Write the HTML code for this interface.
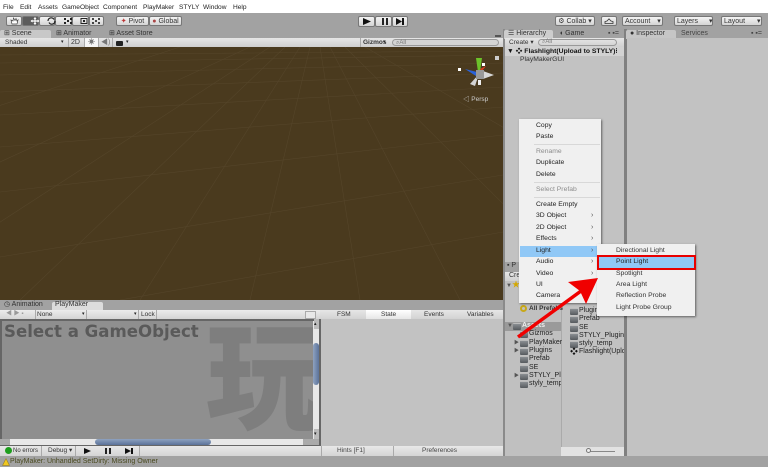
<!DOCTYPE html>
<html><head><meta charset="utf-8">
<style>
html,body{margin:0;padding:0;background:#fff}
#r{position:relative;width:768px;height:467px;overflow:hidden;background:#a2a2a2;font:7px "Liberation Sans","Noto Sans CJK JP",sans-serif;color:#222;filter:blur(.35px)}
#r div,#r span.a{position:absolute;white-space:nowrap;box-sizing:border-box}
.t{line-height:10px;height:10px}
.m{font-size:6.600px}
.btn{background:linear-gradient(#f4f4f4,#d4d4d4);border:1px solid #777;border-radius:2px;text-align:center;line-height:9px;font-size:7px;color:#333}
.mi{left:17px;font-size:6.800px;line-height:10px;height:10px;color:#222}
.dis{color:#8c8c8c}
.ar{left:72px;font-size:7px;color:#555;line-height:10px}
.f{width:8px;height:7px;background:linear-gradient(#8a8e92,#565a5e);border-top:1px solid #bbb;border-radius:1px}
</style></head><body><div id="r">
<!-- menu bar -->
<div style="left:0;top:0;width:768px;height:13px;background:#fff"></div>
<div class="t m" style="left:3px;top:3px">File</div>
<div class="t m" style="left:20px;top:3px">Edit</div>
<div class="t m" style="left:38px;top:3px">Assets</div>
<div class="t m" style="left:62px;top:3px">GameObject</div>
<div class="t m" style="left:103px;top:3px">Component</div>
<div class="t m" style="left:143px;top:3px">PlayMaker</div>
<div class="t m" style="left:179px;top:3px">STYLY</div>
<div class="t m" style="left:203px;top:3px">Window</div>
<div class="t m" style="left:233px;top:3px">Help</div>

<!-- transform tools -->
<div class="btn" style="left:6px;top:16px;width:16px;height:10px"></div>
<div class="btn" style="left:22px;top:16px;width:17px;height:10px;background:#5c5c5c"></div>
<div class="btn" style="left:39px;top:16px;width:16px;height:10px"></div>
<div class="btn" style="left:55px;top:16px;width:17px;height:10px"></div>
<div class="btn" style="left:72px;top:16px;width:17px;height:10px"></div>
<div class="btn" style="left:89px;top:16px;width:15px;height:10px"></div>
<svg style="position:absolute;left:6px;top:16px" width="98" height="10" fill="none">
<path d="M6 8L5 4L7 5L7.500 2L9 4.500L10 2.500L11 5L12 4L11 8Z" fill="#fff" stroke="#444" stroke-width=".7"/>
<path d="M25 5H33M29 1.500V8.500" stroke="#fff" stroke-width="1.200"/>
<path d="M24.500 5L26.500 3.500V6.500ZM33.500 5L31.500 3.500V6.500ZM29 1L27.500 3H30.500ZM29 9L27.500 7H30.500Z" fill="#fff"/>
<path d="M42 5A3.200 3.200 0 0 1 48 3.500M49 5A3.200 3.200 0 0 1 43 6.500" stroke="#222" stroke-width="1.200"/>
<path d="M58 2h2v2h-2zM64 2h2v2h-2zM58 6h2v2h-2zM64 6h2v2h-2zM61 4h2v2h-2z" fill="#222"/>
<rect x="75" y="2.500" width="6" height="5" stroke="#222"/><rect x="77" y="4" width="2" height="2" fill="#222"/>
<path d="M86 2h2v2h-2zM92 2h2v2h-2zM86 6h2v2h-2zM92 6h2v2h-2zM89 4h2v2h-2z" fill="#444"/>
</svg>
<div class="btn" style="left:116px;top:16px;width:33px;height:10px"><span style="color:#b33">✦</span> Pivot</div>
<div class="btn" style="left:149px;top:16px;width:33px;height:10px"><span style="color:#a44">●</span> Global</div>

<!-- play -->
<div class="btn" style="left:358px;top:16px;width:17px;height:11px"></div>
<div class="btn" style="left:375px;top:16px;width:17px;height:11px"></div>
<div class="btn" style="left:392px;top:16px;width:16px;height:11px"></div>
<svg style="position:absolute;left:358px;top:16px" width="50" height="11"><path d="M5 2L13 5.500L5 9Z" fill="#111"/><path d="M24 2h2v7h-2zM28 2h2v7h-2z" fill="#222"/><path d="M38 2L44 5.500L38 9ZM44 2h2v7h-2z" fill="#111"/></svg>

<!-- right toolbar -->
<div class="btn" style="left:555px;top:16px;width:40px;height:10px">⚙ Collab ▾</div>
<div class="btn" style="left:601px;top:16px;width:16px;height:10px"></div>
<svg style="position:absolute;left:604px;top:18px" width="10" height="6"><path d="M1 5.500H9V3.500L7 3L5 .8L3 3L1 3.500Z" fill="none" stroke="#333" stroke-width=".8"/></svg>
<div class="btn" style="left:622px;top:16px;width:41px;height:10px;text-align:left;padding-left:2px">Account<span style="margin-left:7px">▾</span></div>
<div class="btn" style="left:674px;top:16px;width:39px;height:10px;text-align:left;padding-left:2px">Layers<span style="margin-left:11px">▾</span></div>
<div class="btn" style="left:721px;top:16px;width:41px;height:10px;text-align:left;padding-left:2px">Layout<span style="margin-left:12px">▾</span></div>

<!-- scene tabs -->
<div style="left:0;top:30px;width:51px;height:9px;background:#c8c8c8;border-radius:2px 2px 0 0"></div>
<div class="t" style="left:4px;top:29px;color:#333">⊞ Scene</div>
<div class="t" style="left:56px;top:29px;color:#333">⊞ Animator</div>
<div class="t" style="left:109px;top:29px;color:#333">⊞ Asset Store</div>
<div style="left:495px;top:35px;width:6px;height:2px;background:#555"></div>

<!-- scene toolbar -->
<div style="left:0;top:38px;width:503px;height:9px;background:linear-gradient(#e6e6e6,#cfcfcf)"></div>
<div class="t" style="left:5px;top:38px;font-size:6.500px;color:#333;line-height:9px">Shaded</div>
<div class="t" style="left:61px;top:38px;font-size:5px;line-height:9px">▾</div>
<div class="t" style="left:71px;top:38px;line-height:9px;color:#333">2D</div>
<div style="left:85px;top:38px;width:13px;height:9px;background:#f6f6f6"></div>
<div class="t" style="left:88px;top:38px;line-height:9px;color:#777">☀</div>
<div class="t" style="left:101px;top:38px;line-height:9px;color:#777">◀)</div>
<div style="left:116px;top:41px;width:7px;height:5px;background:#222;border-radius:1px"></div>
<div class="t" style="left:126px;top:38px;font-size:5px;line-height:9px">▾</div>
<div style="left:68px;top:38px;width:1px;height:9px;background:#aaa"></div>
<div style="left:84px;top:38px;width:1px;height:9px;background:#aaa"></div>
<div style="left:98px;top:38px;width:1px;height:9px;background:#aaa"></div>
<div style="left:112px;top:38px;width:1px;height:9px;background:#aaa"></div>
<div style="left:360px;top:38px;width:1px;height:9px;background:#aaa"></div>
<div class="t" style="left:363px;top:38px;line-height:9px;color:#333;font-weight:bold;font-size:6.500px">Gizmos</div>
<div class="t" style="left:383px;top:38px;font-size:5px;line-height:9px">▾</div>
<div style="left:392px;top:39px;width:107px;height:7px;border:1px solid #999;border-radius:4px;background:#d4d4d4;color:#777;font-size:6px;line-height:6px;padding-left:3px">⌕All</div>

<!-- scene view -->
<div style="left:0;top:47px;width:503px;height:253px;background:#4a3a1e;overflow:hidden">
<svg width="503" height="253" style="position:absolute;left:0;top:0" stroke="#55452a" stroke-width=".6" fill="none">
<path d="M250 0L-300 253M270 0L-120 253M285 0L20 253M300 0L140 253M310 0L250 253M320 0L360 253M330 0L460 253M345 0L600 253M365 0L800 253M180 0L-600 253"/>
<path d="M0 8L503 4M0 16L503 8M0 28L503 16M0 45L503 26M0 68L503 40M0 100L503 60M0 145L503 88M0 210L503 128M120 253L503 185"/>
</svg>
</div>
<!-- gizmo -->
<svg style="position:absolute;left:455px;top:55px" width="45" height="36">
<path d="M21 3h6l-2 14h-2z" fill="#6cc22a"/>
<path d="M10 14L22 17L21 21Z" fill="#2a62d8"/>
<path d="M39 20L28 16V24Z" fill="#d8d8d8"/>
<path d="M31 11L27 16L25 14Z" fill="#d83a20"/>
<path d="M24 19L15 29L20 31Z" fill="#d4d4d4"/>
<rect x="21" y="15" width="8" height="9" fill="#999"/>
<rect x="23" y="25" width="3" height="5" fill="#eee"/>
<rect x="3" y="13" width="3" height="3" fill="#fff"/><rect x="27" y="8" width="3" height="3" fill="#fff"/>
</svg>
<div class="t" style="left:463px;top:95px;color:#ccc;font-size:6.500px">◁ Persp</div>
<div style="left:495px;top:56px;width:4px;height:4px;background:#ccc"></div>

<!-- dividers -->
<div style="left:503px;top:29px;width:2px;height:427px;background:#8a8a8a"></div>
<div style="left:624px;top:29px;width:3px;height:427px;background:#808080"></div>

<!-- hierarchy -->
<div style="left:505px;top:29px;width:119px;height:9px;background:#a2a2a2"></div>
<div style="left:504px;top:30px;width:49px;height:9px;background:#cdcdcd;border-radius:2px 2px 0 0"></div>
<div class="t" style="left:508px;top:29px;color:#333">☰ Hierarchy</div>
<div class="t" style="left:559px;top:29px;color:#333">◖ Game</div>
<div class="t" style="left:608px;top:29px;color:#444">▪ ▪=</div>
<div style="left:505px;top:38px;width:119px;height:9px;background:linear-gradient(#e6e6e6,#d0d0d0)"></div>
<div class="t" style="left:509px;top:38px;line-height:9px;font-size:6.500px;color:#333">Create ▾</div>
<div style="left:538px;top:39px;width:79px;height:7px;border:1px solid #999;border-radius:4px;color:#777;font-size:6px;line-height:5px;padding-left:3px">⌕All</div>
<div style="left:505px;top:47px;width:119px;height:215px;background:#c2c2c2"></div>
<div style="left:505px;top:47px;width:119px;height:9px;background:#d2d2d2"></div>
<div class="t" style="left:507px;top:47px;font-weight:bold;font-size:6.800px;line-height:9px;color:#111">▼ ❖ Flashlight(Upload to STYLY)⁝</div>
<div class="t" style="left:520px;top:55px;color:#333;font-size:6.800px">PlayMakerGUI</div>

<!-- inspector -->
<div style="left:627px;top:29px;width:141px;height:9px;background:#a2a2a2"></div>
<div style="left:626px;top:30px;width:50px;height:9px;background:#c6c6c6;border-radius:2px 2px 0 0"></div>
<div class="t" style="left:630px;top:29px;color:#333">● Inspector</div>
<div class="t" style="left:681px;top:29px;color:#444">Services</div>
<div class="t" style="left:751px;top:29px;color:#444">▪ ▪=</div>
<div style="left:627px;top:38px;width:141px;height:418px;background:#c2c2c2"></div>

<!-- project panel -->
<div style="left:505px;top:262px;width:119px;height:10px;background:#a2a2a2"></div>
<div class="t" style="left:507px;top:261px;color:#333">▪ P</div>
<div style="left:505px;top:272px;width:119px;height:9px;background:linear-gradient(#e6e6e6,#d0d0d0)"></div>
<div class="t" style="left:509px;top:271px;color:#333">Cre</div>
<div style="left:505px;top:281px;width:56px;height:175px;background:#c0c0c0"></div>
<div style="left:561px;top:281px;width:63px;height:175px;background:#c2c2c2;border-left:1px solid #aaa"></div>
<div class="t" style="left:506px;top:280px;color:#d4a800;font-size:8px"><span style="color:#555;font-size:6px">▼</span>★</div>
<div style="left:520px;top:305px;width:7px;height:7px;border:2px solid #c8a818;border-radius:50%"></div>
<div class="t" style="left:529px;top:304px;color:#333;font-weight:bold;font-size:6.500px">All Prefabs</div>
<div style="left:505px;top:322px;width:56px;height:9px;background:#9a9a9a"></div>
<div class="t" style="left:507px;top:321px;color:#555;font-size:6px">▼</div>
<div class="f" style="left:513px;top:323px"></div>
<div class="t" style="left:522px;top:321px;font-weight:bold;color:#eee">Assets</div>
<div class="f" style="left:520px;top:331px"></div><div class="t" style="left:529px;top:329px">Gizmos</div>
<div class="t" style="left:514px;top:338px;font-size:5px;color:#555">▶</div><div class="f" style="left:520px;top:340px"></div><div class="t" style="left:529px;top:338px">PlayMaker</div>
<div class="t" style="left:514px;top:346px;font-size:5px;color:#555">▶</div><div class="f" style="left:520px;top:348px"></div><div class="t" style="left:529px;top:346px">Plugins</div>
<div class="f" style="left:520px;top:356px"></div><div class="t" style="left:529px;top:354px">Prefab</div>
<div class="f" style="left:520px;top:365px"></div><div class="t" style="left:529px;top:363px">SE</div>
<div class="t" style="left:514px;top:371px;font-size:5px;color:#555">▶</div><div class="f" style="left:520px;top:373px"></div><div class="t" style="left:529px;top:371px;width:32px;overflow:hidden">STYLY_Plugin</div>
<div class="f" style="left:520px;top:381px"></div><div class="t" style="left:529px;top:379px;width:32px;overflow:hidden">styly_temp</div>

<div class="f" style="left:570px;top:308px"></div><div class="t" style="left:579px;top:306px">Plugin</div>
<div class="f" style="left:570px;top:316px"></div><div class="t" style="left:579px;top:314px">Prefab</div>
<div class="f" style="left:570px;top:325px"></div><div class="t" style="left:579px;top:323px">SE</div>
<div class="f" style="left:570px;top:333px"></div><div class="t" style="left:579px;top:331px">STYLY_Plugin</div>
<div class="f" style="left:570px;top:341px"></div><div class="t" style="left:579px;top:339px">styly_temp</div>
<div class="t" style="left:570px;top:347px;font-size:8px;color:#111">❖</div><div class="t" style="left:579px;top:347px;width:45px;overflow:hidden">Flashlight(Upload</div>
<div style="left:561px;top:447px;width:63px;height:9px;background:#e2e2e2"></div>
<div style="left:588px;top:451px;width:27px;height:1px;background:#888"></div>
<div style="left:586px;top:448px;width:5px;height:5px;border-radius:50%;background:#eee;border:1px solid #777"></div>

<!-- playmaker -->
<div style="left:0;top:300px;width:503px;height:10px;background:#a2a2a2"></div>
<div class="t" style="left:4px;top:300px;color:#333">◷ Animation</div>
<div style="left:52px;top:302px;width:51px;height:8px;background:#dcdcdc;border-radius:2px 2px 0 0"></div>
<div class="t" style="left:55px;top:300px;color:#333">PlayMaker</div>
<div style="left:0;top:310px;width:503px;height:9px;background:linear-gradient(#ececec,#d4d4d4)"></div>
<div class="t" style="left:6px;top:310px;line-height:9px;color:#999;font-size:6px">◀ ▶ ▪</div>
<div class="t" style="left:37px;top:310px;line-height:9px;font-size:6.500px;color:#333">None</div>
<div class="t" style="left:82px;top:310px;line-height:9px;font-size:5px">▾</div>
<div style="left:35px;top:310px;width:1px;height:9px;background:#aaa"></div>
<div style="left:86px;top:310px;width:1px;height:9px;background:#aaa"></div>
<div class="t" style="left:134px;top:310px;line-height:9px;font-size:5px">▾</div>
<div style="left:138px;top:310px;width:1px;height:9px;background:#aaa"></div>
<div class="t" style="left:141px;top:310px;line-height:9px;color:#333;font-size:6.500px">Lock</div>
<div style="left:156px;top:310px;width:1px;height:9px;background:#aaa"></div>
<div style="left:305px;top:311px;width:11px;height:8px;background:#e8e8e8;border:1px solid #aaa"></div>
<div style="left:320px;top:310px;width:183px;height:9px;background:linear-gradient(#e6e6e6,#d2d2d2)"></div>
<div style="left:366px;top:310px;width:45px;height:9px;background:linear-gradient(#fff,#e6e6e6)"></div>
<div class="t" style="left:337px;top:310px;line-height:9px;font-size:6.500px;color:#333">FSM</div>
<div class="t" style="left:381px;top:310px;line-height:9px;font-size:6.500px;color:#333">State</div>
<div class="t" style="left:424px;top:310px;line-height:9px;font-size:6.500px;color:#333">Events</div>
<div class="t" style="left:467px;top:310px;line-height:9px;font-size:6.500px;color:#333">Variables</div>
<div style="left:320px;top:319px;width:183px;height:127px;background:#c2c2c2"></div>

<!-- graph -->
<div style="left:0;top:319px;width:321px;height:127px;background:#666"></div>
<div style="left:2px;top:321px;width:311px;height:118px;overflow:hidden;background:#8f8f8f">
<div style="left:204px;top:-17px;font:900 118px/130px 'Noto Sans CJK SC',sans-serif;color:#7e7e7e">玩</div>
<div style="left:2px;top:0px;font:bold 16.600px/22px 'DejaVu Sans',sans-serif;color:#5a5a5a">Select a GameObject</div>
</div>
<!-- v scrollbar -->
<div style="left:313px;top:321px;width:6px;height:118px;background:#e8e8e8"></div>
<div style="left:313px;top:343px;width:6px;height:42px;background:linear-gradient(90deg,#8ea2c0,#5b7299);border-radius:3px"></div>
<div class="t" style="left:314px;top:319px;font-size:5px;background:#bbb;width:5px">▴</div>
<div class="t" style="left:314px;top:429px;font-size:5px;background:#bbb;width:5px">▾</div>
<!-- h scrollbar -->
<div style="left:0;top:439px;width:319px;height:6px;background:#e8e8e8"></div>
<div style="left:0;top:439px;width:10px;height:6px;background:#aaa"></div>
<div style="left:303px;top:439px;width:16px;height:6px;background:#aaa"></div>
<div style="left:95px;top:439px;width:116px;height:6px;background:linear-gradient(#8ea2c0,#5b7299);border-radius:3px"></div>

<!-- bottom bar -->
<div style="left:0;top:446px;width:503px;height:10px;background:linear-gradient(#e8e8e8,#d4d4d4)"></div>
<div style="left:5px;top:447px;width:7px;height:7px;border-radius:50%;background:#1d9e1d"></div>
<div class="t" style="left:13px;top:446px;font-size:6px;color:#333">No errors</div>
<div style="left:41px;top:446px;width:1px;height:10px;background:#aaa"></div>
<div class="t" style="left:48px;top:446px;font-size:6.500px;color:#333">Debug ▾</div>
<div style="left:75px;top:446px;width:1px;height:10px;background:#aaa"></div>
<div style="left:139px;top:446px;width:1px;height:10px;background:#aaa"></div>
<svg style="position:absolute;left:80px;top:446px" width="60" height="10"><path d="M4 2L11 5L4 8Z" fill="#111"/><path d="M25 2h2v6h-2zM29 2h2v6h-2z" fill="#222"/><path d="M45 2L51 5L45 8ZM51 2h2v6h-2z" fill="#111"/></svg>
<div class="t" style="left:337px;top:446px;font-size:6.500px;color:#444">Hints [F1]</div>
<div class="t" style="left:422px;top:446px;font-size:6.500px;color:#444">Preferences</div>
<div style="left:321px;top:446px;width:1px;height:10px;background:#aaa"></div>
<div style="left:393px;top:446px;width:1px;height:10px;background:#aaa"></div>

<!-- status -->
<svg style="position:absolute;left:2px;top:458px" width="8" height="8"><path d="M4 .5L7.500 7.500H.5Z" fill="#f0c820" stroke="#8a7010" stroke-width=".5"/></svg>
<div class="t" style="left:10px;top:457px;color:#4a4a20;font-size:7px">PlayMaker: Unhandled SetDirty: Missing Owner</div>

<!-- context menu -->
<div style="left:519px;top:119px;width:82px;height:184px;background:#f0f0f0;box-shadow:1px 1px 2px rgba(0,0,0,.5)"></div>
<div style="left:520px;top:246px;width:77px;height:11px;background:#90c8f6"></div>
<div style="left:534px;top:144px;width:66px;height:1px;background:#d8d8d8"></div>
<div style="left:534px;top:182px;width:66px;height:1px;background:#d8d8d8"></div>
<div style="left:534px;top:197px;width:66px;height:1px;background:#d8d8d8"></div>
<div style="left:519px;top:119px;width:82px;height:184px">
<div class="mi" style="top:2px">Copy</div>
<div class="mi" style="top:13px">Paste</div>
<div class="mi dis" style="top:28px">Rename</div>
<div class="mi" style="top:39px">Duplicate</div>
<div class="mi" style="top:51px">Delete</div>
<div class="mi dis" style="top:66px">Select Prefab</div>
<div class="mi" style="top:81px">Create Empty</div>
<div class="mi" style="top:92px">3D Object</div><div class="ar" style="top:92px">›</div>
<div class="mi" style="top:104px">2D Object</div><div class="ar" style="top:104px">›</div>
<div class="mi" style="top:115px">Effects</div><div class="ar" style="top:115px">›</div>
<div class="mi" style="top:127px">Light</div><div class="ar" style="top:127px">›</div>
<div class="mi" style="top:138px">Audio</div><div class="ar" style="top:138px">›</div>
<div class="mi" style="top:150px">Video</div><div class="ar" style="top:150px">›</div>
<div class="mi" style="top:161px">UI</div>
<div class="mi" style="top:172px">Camera</div>
</div>

<!-- submenu -->
<div style="left:597px;top:244px;width:98px;height:72px;background:#f0f0f0;box-shadow:1px 1px 2px rgba(0,0,0,.5)"></div>
<div style="left:597px;top:255px;width:99px;height:15px;background:#90c8f6;border:2px solid #e80000"></div>
<div class="mi" style="left:616px;top:246px;color:#333">Directional Light</div>
<div class="mi" style="left:616px;top:257px;color:#222">Point Light</div>
<div class="mi" style="left:616px;top:269px;color:#333">Spotlight</div>
<div class="mi" style="left:616px;top:280px;color:#333">Area Light</div>
<div class="mi" style="left:616px;top:291px;color:#333">Reflection Probe</div>
<div class="mi" style="left:616px;top:303px;color:#333">Light Probe Group</div>

<!-- red arrow -->
<svg style="position:absolute;left:0;top:0" width="768" height="467"><path d="M518 337L581 291" stroke="#f00000" stroke-width="3.500" fill="none"/><path d="M598 278L568 282L580 291L586 304Z" fill="#f00000"/></svg>
</div></body></html>
